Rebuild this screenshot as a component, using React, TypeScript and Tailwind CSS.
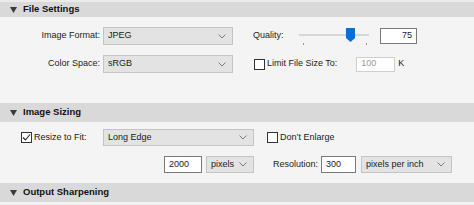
import React from 'react';

const font = { fontFamily: '"Liberation Sans", Arial, sans-serif' };

function Chevron() {
  return (
    <svg width="8" height="5" viewBox="0 0 8 5" className="shrink-0">
      <polyline points="0.5,0.5 4,4 7.5,0.5" fill="none" stroke="#7a7a7a" strokeWidth="1" />
    </svg>
  );
}

function Select({ value, w }: { value: string; w: string }) {
  return (
    <div className={`${w} h-full flex items-center justify-between pl-[4px] pr-[6px] bg-[#e3e3e3] border border-[#c4c4c4] text-[9px] text-[#1b1b1b]`}>
      <span>{value}</span>
      <Chevron />
    </div>
  );
}

function Input({ value, w, right, disabled }: { value: string; w: string; right?: boolean; disabled?: boolean }) {
  return (
    <div
      className={`${w} h-full flex items-center px-[4px] bg-white border text-[9px] ${
        right ? 'justify-end' : 'justify-start'
      } ${disabled ? 'border-[#cfcfcf] text-[#9a9a9a]' : 'border-[#7a7a7a] text-[#1b1b1b]'}`}
    >
      {value}
    </div>
  );
}

function Checkbox({ checked }: { checked?: boolean }) {
  return (
    <div className="w-[11px] h-[11px] border border-[#333] bg-white flex items-center justify-center shrink-0">
      {checked && (
        <svg width="9" height="9" viewBox="0 0 9 9">
          <polyline points="1,4.5 3.5,7 8,1.5" fill="none" stroke="#222" strokeWidth="1.1" />
        </svg>
      )}
    </div>
  );
}

function Header({ title, h }: { title: string; h: string }) {
  return (
    <div className={`${h} bg-[#d9d9d9] flex items-center pl-[10px] gap-[6px]`}>
      <svg width="7" height="6" viewBox="0 0 7 6">
        <polygon points="0,0 7,0 3.5,6" fill="#3c3c3c" />
      </svg>
      <span className="text-[9.5px] font-bold text-[#111]">{title}</span>
    </div>
  );
}

export default function App() {
  return (
    <div style={font} className="w-[474px] h-[205px] overflow-hidden bg-[#f4f4f4] flex flex-col">
      <div className="h-[2px] bg-[#ececec]" />
      <Header title="File Settings" h="h-[15px]" />

      <div className="h-[86px] pt-[10px] flex flex-col gap-[10px]">
        <div className="h-[18px] flex items-center">
          <span className="w-[100px] text-right text-[9px] text-[#1b1b1b]">Image Format:</span>
          <div className="ml-[3px] h-full flex">
            <Select value="JPEG" w="w-[130px]" />
          </div>
          <span className="ml-[20px] w-[46px] text-[9px] text-[#1b1b1b]">Quality:</span>
          <div className="relative w-[70px] h-full">
            <div className="absolute left-0 right-0 top-[7px] h-[2px] bg-[#d6d6d6]" />
            <div className="absolute left-[4px] top-[16px] w-px h-[2px] bg-[#9a9a9a]" />
            <div className="absolute left-[67px] top-[16px] w-px h-[2px] bg-[#9a9a9a]" />
            <svg className="absolute left-[47px] top-[1px]" width="9" height="14" viewBox="0 0 9 14">
              <polygon points="0,0 9,0 9,10 4.5,14 0,10" fill="#0a6ed6" />
            </svg>
          </div>
          <div className="ml-[11px] h-[16px] flex">
            <Input value="75" w="w-[37px]" right />
          </div>
        </div>

        <div className="h-[18px] flex items-center">
          <span className="w-[100px] text-right text-[9px] text-[#1b1b1b]">Color Space:</span>
          <div className="ml-[3px] h-full flex">
            <Select value="sRGB" w="w-[130px]" />
          </div>
          <div className="ml-[21px] flex items-center gap-[2px]">
            <Checkbox />
            <span className="text-[9px] text-[#1b1b1b]">Limit File Size To:</span>
          </div>
          <div className="ml-[19px] h-[15px] flex">
            <Input value="100" w="w-[39px]" disabled />
          </div>
          <span className="ml-[3px] text-[9px] text-[#1b1b1b]">K</span>
        </div>
      </div>

      <Header title="Image Sizing" h="h-[19px]" />

      <div className="h-[61px] pt-[7px] flex flex-col gap-[10px]">
        <div className="h-[17px] flex items-center">
          <div className="ml-[21px] w-[82px] flex items-center gap-[2px]">
            <Checkbox checked />
            <span className="text-[9px] text-[#1b1b1b]">Resize to Fit:</span>
          </div>
          <div className="h-full flex">
            <Select value="Long Edge" w="w-[151px]" />
          </div>
          <div className="ml-[13px] flex items-center gap-[2px]">
            <Checkbox />
            <span className="text-[9px] text-[#1b1b1b]">Don’t Enlarge</span>
          </div>
        </div>

        <div className="h-[17px] flex items-center">
          <div className="ml-[164px] h-full flex">
            <Input value="2000" w="w-[38px]" />
          </div>
          <div className="ml-[4px] h-full flex">
            <Select value="pixels" w="w-[48px]" />
          </div>
          <span className="ml-[19px] w-[48px] text-[9px] text-[#1b1b1b]">Resolution:</span>
          <div className="h-full flex">
            <Input value="300" w="w-[35px]" />
          </div>
          <div className="ml-[5px] h-full flex">
            <Select value="pixels per inch" w="w-[91px]" />
          </div>
        </div>
      </div>

      <Header title="Output Sharpening" h="h-[19px]" />
    </div>
  );
}
